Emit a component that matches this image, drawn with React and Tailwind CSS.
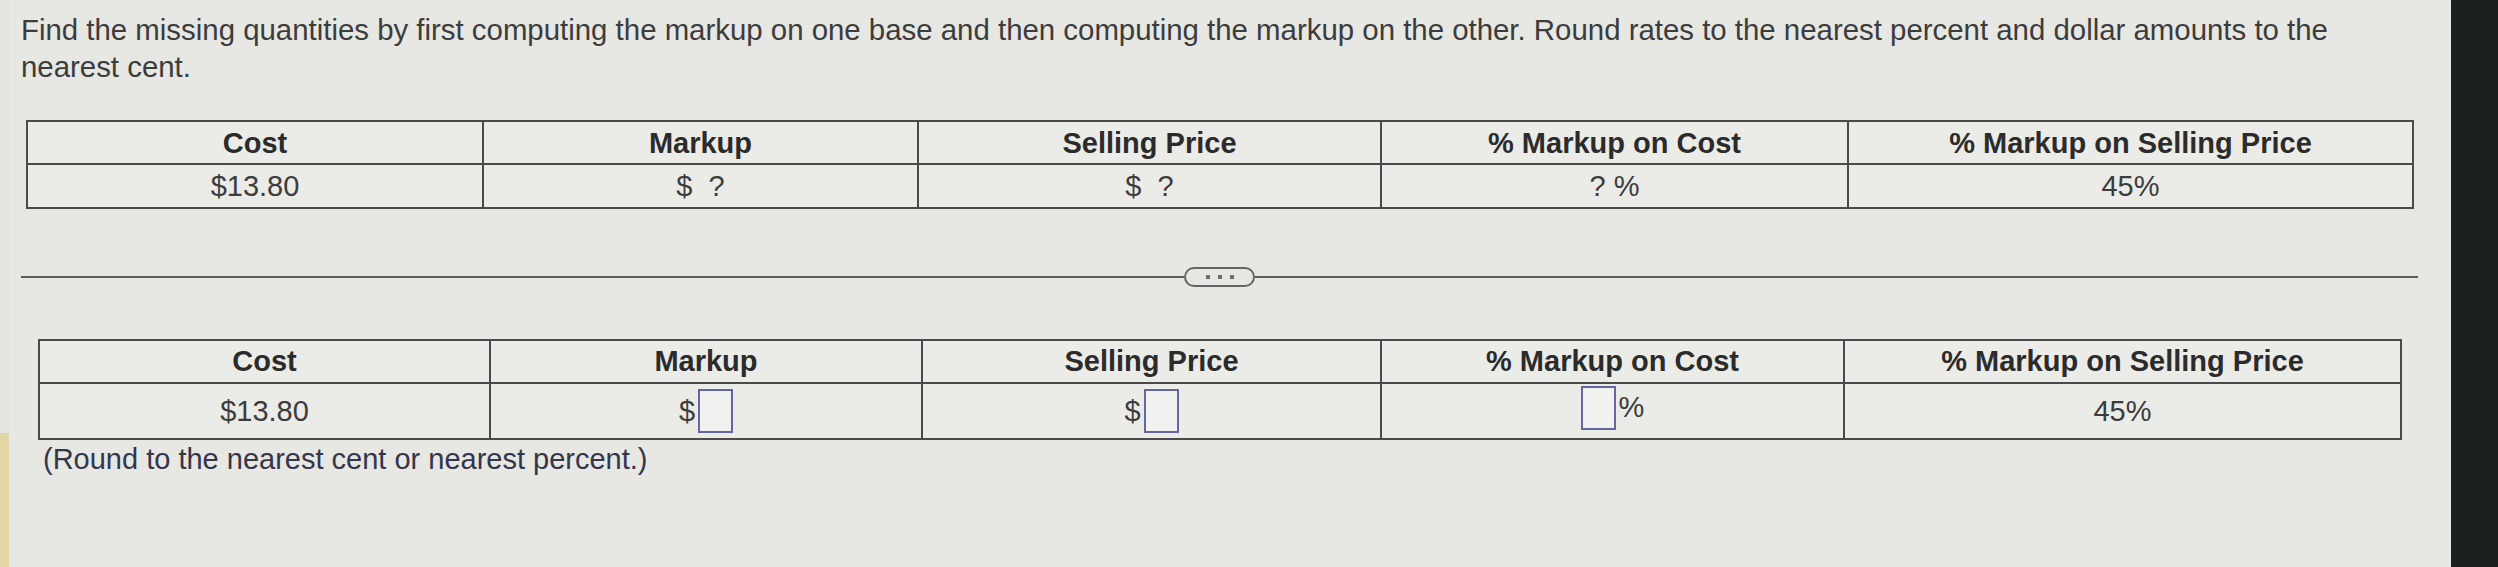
import React from "react";

const FONT = { fontFamily: '"Liberation Sans", Arial, sans-serif' };

function AnswerBox() {
  return <span className="inline-block w-[35px] h-[44px] border-2 border-[#6466a2] bg-[#f1f1ef] align-middle" />;
}

export default function App() {
  return (
    <div className="flex w-[2498px] h-[567px] overflow-hidden bg-[#e7e7e3]" style={FONT}>
      {/* left edge of the photo */}
      <div className="w-[9px] flex flex-col">
        <div className="h-[433px] bg-[#e4e4df]" />
        <div className="flex-1 bg-[#e0d7a2]" />
      </div>

      <main className="flex-1 pl-[12px] pr-[29px] pt-[11px] text-[29px] leading-[37px] text-[#3c3c3c]">
        <p className="w-[2330px] text-[29.4px]">
          Find the missing quantities by first computing the markup on one base and then computing the markup on the other. Round rates to the nearest percent and dollar amounts to the nearest cent.
        </p>

        {/* given values */}
        <table className="mt-[35px] ml-[5px] w-[2386px] table-fixed border-collapse text-center leading-[33px]">
          <colgroup>
            <col className="w-[456px]" />
            <col className="w-[435px]" />
            <col className="w-[463px]" />
            <col className="w-[467px]" />
            <col className="w-[565px]" />
          </colgroup>
          <thead>
            <tr className="h-[43px] font-bold text-[#2b2b2b]">
              <th className="border-2 border-[#4a4a4a] bg-[#ebebe8] pt-[2px]">Cost</th>
              <th className="border-2 border-[#4a4a4a] bg-[#ebebe8] pt-[2px]">Markup</th>
              <th className="border-2 border-[#4a4a4a] bg-[#ebebe8] pt-[2px]">Selling Price</th>
              <th className="border-2 border-[#4a4a4a] bg-[#ebebe8] pt-[2px]">% Markup on Cost</th>
              <th className="border-2 border-[#4a4a4a] bg-[#ebebe8] pt-[2px]">% Markup on Selling Price</th>
            </tr>
          </thead>
          <tbody>
            <tr className="h-[44px]">
              <td className="border-2 border-[#4a4a4a] bg-[#ebebe8]">$13.80</td>
              <td className="border-2 border-[#4a4a4a] bg-[#ebebe8]">$&nbsp;&nbsp;?</td>
              <td className="border-2 border-[#4a4a4a] bg-[#ebebe8]">$&nbsp;&nbsp;?</td>
              <td className="border-2 border-[#4a4a4a] bg-[#ebebe8]">?&nbsp;%</td>
              <td className="border-2 border-[#4a4a4a] bg-[#ebebe8]">45%</td>
            </tr>
          </tbody>
        </table>

        {/* divider with more button */}
        <div className="mt-[58px] flex items-center w-[2397px]">
          <div className="flex-1 h-[2px] bg-[#5c5c5c]" />
          <button className="w-[71px] h-[20px] rounded-full border-2 border-[#656565] flex items-center justify-center gap-[8px]">
            <span className="w-[4px] h-[4px] bg-[#6e6e6e]" />
            <span className="w-[4px] h-[4px] bg-[#6e6e6e]" />
            <span className="w-[4px] h-[4px] bg-[#6e6e6e]" />
          </button>
          <div className="flex-1 h-[2px] bg-[#5c5c5c]" />
        </div>

        {/* answer table */}
        <table className="mt-[52px] ml-[17px] w-[2362px] table-fixed border-collapse text-center leading-[33px]">
          <colgroup>
            <col className="w-[451px]" />
            <col className="w-[432px]" />
            <col className="w-[459px]" />
            <col className="w-[463px]" />
            <col className="w-[557px]" />
          </colgroup>
          <thead>
            <tr className="h-[43px] font-bold text-[#2b2b2b]">
              <th className="border-2 border-[#4a4a4a] bg-[#ebebe8]">Cost</th>
              <th className="border-2 border-[#4a4a4a] bg-[#ebebe8]">Markup</th>
              <th className="border-2 border-[#4a4a4a] bg-[#ebebe8]">Selling Price</th>
              <th className="border-2 border-[#4a4a4a] bg-[#ebebe8]">% Markup on Cost</th>
              <th className="border-2 border-[#4a4a4a] bg-[#ebebe8]">% Markup on Selling Price</th>
            </tr>
          </thead>
          <tbody>
            <tr className="h-[56px]">
              <td className="border-2 border-[#4a4a4a] bg-[#ebebe8]">$13.80</td>
              <td className="border-2 border-[#4a4a4a] bg-[#ebebe8]">
                <span className="inline-flex items-center gap-[3px]">$<AnswerBox /></span>
              </td>
              <td className="border-2 border-[#4a4a4a] bg-[#ebebe8]">
                <span className="inline-flex items-center gap-[3px]">$<AnswerBox /></span>
              </td>
              <td className="border-2 border-[#4a4a4a] bg-[#ebebe8]">
                <span className="inline-flex items-center gap-[3px]"><AnswerBox />%</span>
              </td>
              <td className="border-2 border-[#4a4a4a] bg-[#ebebe8]">45%</td>
            </tr>
          </tbody>
        </table>
        <p className="mt-[3px] ml-[22px] leading-[33px] text-[#34364a]">(Round to the nearest cent or nearest percent.)</p>
      </main>

      {/* dark bezel at the right */}
      <div className="w-[47px] bg-[#1d2021]" />
    </div>
  );
}
